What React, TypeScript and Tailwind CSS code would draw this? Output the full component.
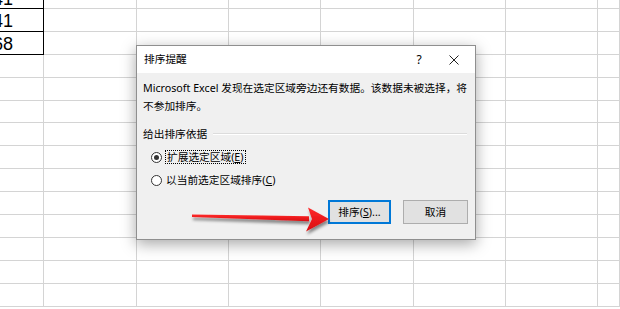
import React from "react";

const colWidths = [44, 93, 92, 92, 93, 92, 92, 22];
const rowCount = 13;

const cellText: Record<string, string> = {
	"0-0": "41",
	"1-0": "41",
	"2-0": "68",
};

const Sheet = () => {
	const rows = [9, ...Array(rowCount).fill(22.9)];
	return (
		<div className="flex flex-col">
			{rows.map((h, r) => (
				<div key={r} className="flex" style={{ height: h }}>
					{colWidths.map((w, c) => {
						const picked = c === 0 && r < 3;
						const text = cellText[`${r}-${c}`];
						return (
							<div
								key={c}
								style={{ width: w }}
								className={`shrink-0 overflow-hidden border-r border-b ${
									picked ? "border-black" : "border-[#d4d4d4]"
								}`}
							>
								{text && (
									<div
										className={`-ml-[7px] whitespace-nowrap text-[18px] leading-[25px] text-black ${
											r === 0 ? "-mt-[13px]" : ""
										}`}
										style={{ fontFamily: '"Liberation Sans", Arial, sans-serif' }}
									>
										{text}
									</div>
								)}
							</div>
						);
					})}
				</div>
			))}
		</div>
	);
};

const Radio = ({ checked }: { checked?: boolean }) => (
	<span className="flex h-[11px] w-[11px] items-center justify-center rounded-full border border-[#333] bg-white">
		{checked && <span className="h-[5px] w-[5px] rounded-full bg-[#333]" />}
	</span>
);

const Arrow = () => (
	<svg width="150" height="34" viewBox="0 0 150 34" className="absolute left-[185px] top-[203px]">
		<defs>
			<filter id="sh" x="-10%" y="-50%" width="120%" height="200%">
				<feDropShadow dx="1" dy="3" stdDeviation="1.6" floodColor="#000" floodOpacity="0.45" />
			</filter>
			<linearGradient id="rd" x1="0" y1="0" x2="0" y2="1">
				<stop offset="0" stopColor="#ff2a2a" />
				<stop offset="1" stopColor="#d80c10" />
			</linearGradient>
		</defs>
		<g filter="url(#sh)" fill="url(#rd)">
			<polygon points="7,11.6 124,13.2 124,18.2 7,14" />
			<polygon points="123,4.5 144,16 121,28.5 127,16" />
		</g>
	</svg>
);

const App = () => {
	return (
		<div
			className="relative h-[309px] w-[620px] overflow-hidden bg-white"
			style={{ fontFamily: '"Noto Sans", "Noto Sans CJK SC", sans-serif' }}
		>
			<Sheet />

			{/* sort warning dialog */}
			<div className="absolute left-[136px] top-[45px] flex h-[195px] w-[340px] flex-col border border-[#8f8f8f] bg-[#f0f0f0] text-[10.7px] text-black shadow-[0_4px_14px_rgba(0,0,0,0.35)]">
				<div className="flex h-[27px] items-center bg-white pl-[7px]">
					<span className="flex-1">排序提醒</span>
					<span className="w-[20px] text-center text-[12px]">?</span>
					<svg width="10" height="10" viewBox="0 0 10 10" className="ml-[20px] mr-[16px]">
						<path d="M0.5 0.5 L9.5 9.5 M9.5 0.5 L0.5 9.5" stroke="#222" strokeWidth="1" />
					</svg>
				</div>
				<div className="flex flex-1 flex-col px-[6px] pt-[6px]">
					<p className="whitespace-nowrap leading-[18px]">
						Microsoft Excel 发现在选定区域旁边还有数据。该数据未被选择，将
						<br />
						不参加排序。
					</p>
					<div className="mt-[10px] flex h-[18px] items-center">
						<span>给出排序依据</span>
						<span className="ml-[6px] mr-[2px] h-[2px] flex-1 border-t border-b border-t-[#dcdcdc] border-b-white" />
					</div>
					<div className="ml-[8px] mt-[5px] flex h-[18px] items-center gap-[3px]">
						<Radio checked />
						<span className="border border-dotted border-black px-[1px] leading-[12px]">
							扩展选定区域(<span className="underline">E</span>)
						</span>
					</div>
					<div className="ml-[8px] mt-[5px] flex h-[18px] items-center gap-[4px]">
						<Radio />
						<span>
							以当前选定区域排序(<span className="underline">C</span>)
						</span>
					</div>
					<div className="mt-[11px] flex justify-end gap-[12px] pr-[1px]">
						<button className="h-[24px] w-[63px] border border-[#0078d7] bg-[#e1e1e1] outline outline-1 -outline-offset-2 outline-[#0078d7]">
							排序(<span className="underline">S</span>)...
						</button>
						<button className="h-[24px] w-[65px] border border-[#adadad] bg-[#e1e1e1]">取消</button>
					</div>
				</div>
			</div>

			<Arrow />
		</div>
	);
};

export default App;
